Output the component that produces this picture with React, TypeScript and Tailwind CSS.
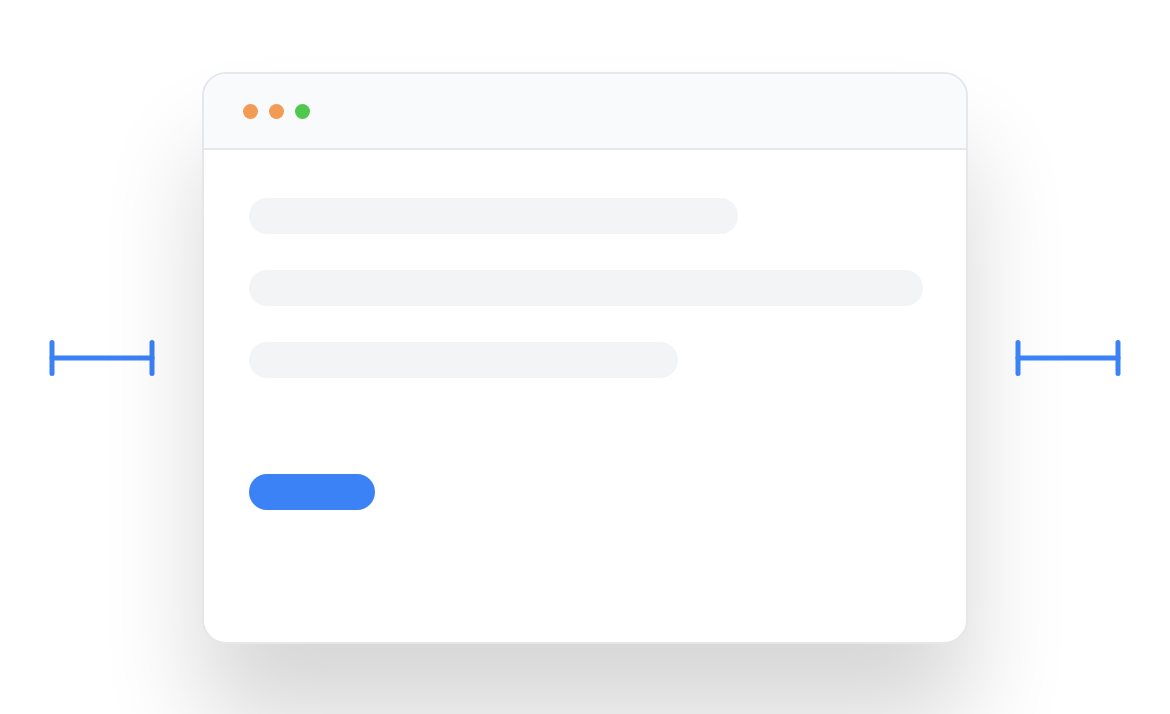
import React from "react";

function Bracket() {
  return (
    <svg width="106" height="36" viewBox="0 0 106 36" className="shrink-0">
      <g stroke="#3b82f6" strokeWidth="5" strokeLinecap="round" fill="none">
        <line x1="3" y1="2.5" x2="3" y2="33.5" />
        <line x1="103" y1="2.5" x2="103" y2="33.5" />
        <line x1="3" y1="18" x2="103" y2="18" />
      </g>
    </svg>
  );
}

export default function App() {
  return (
    <div className="w-full h-[714px] overflow-hidden bg-white flex items-center justify-center gap-[47px] pt-[2px]">
      <Bracket />

      {/* browser window mock */}
      <div className="w-[766px] h-[572px] shrink-0 rounded-3xl border-2 border-[#e5e7eb] bg-white overflow-hidden flex flex-col shadow-[0_77px_100px_rgba(0,0,0,0.16)]">
        <div className="h-[76px] shrink-0 bg-[#f9fafb] border-b-2 border-[#e5e7eb] flex items-center gap-[11px] pl-[39px] pt-px">
          <span className="w-[15px] h-[15px] rounded-full bg-[#f29b55]" />
          <span className="w-[15px] h-[15px] rounded-full bg-[#f29b55]" />
          <span className="w-[15px] h-[15px] rounded-full bg-[#50c84e]" />
        </div>
        <div className="flex-1 flex flex-col pt-12 pl-[45px] pr-[43px]">
          <div className="h-9 w-[489px] rounded-full bg-[#f3f4f6]" />
          <div className="h-9 w-full rounded-full bg-[#f3f4f6] mt-9" />
          <div className="h-9 w-[429px] rounded-full bg-[#f3f4f6] mt-9" />
          <div className="h-9 w-[126px] rounded-full bg-[#3b82f6] mt-24" />
        </div>
      </div>

      <Bracket />
    </div>
  );
}
